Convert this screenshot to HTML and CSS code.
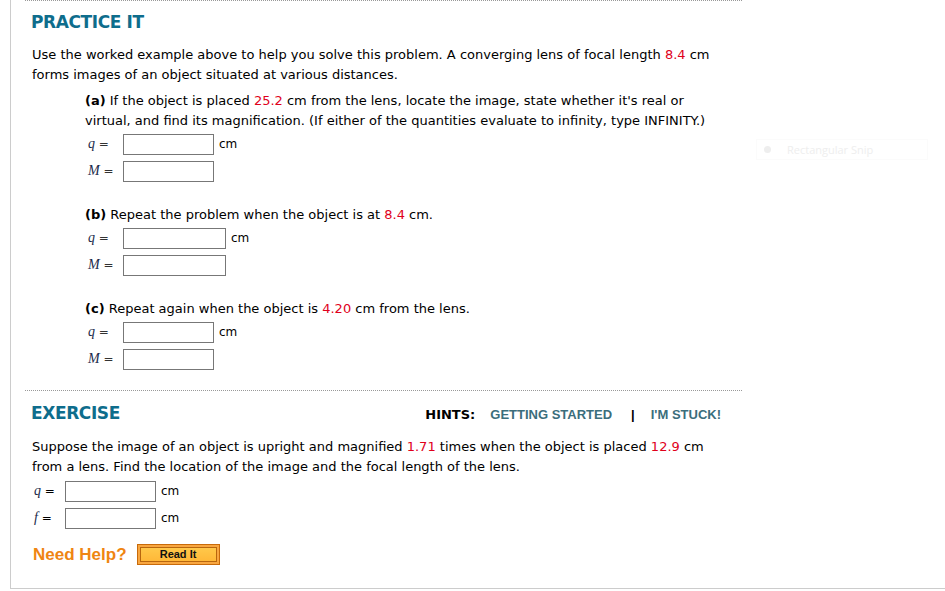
FILE: index.html
```html
<!DOCTYPE html>
<html>
<head>
<meta charset="utf-8">
<link rel="stylesheet" href="styles.css">
</head>
<body>
<div class="frame">
  <div class="section">
    <h2 class="title">PRACTICE IT</h2>
    <p class="text">Use the worked example above to help you solve this problem. A converging lens of focal length <span class="num">8.4</span> cm forms images of an object situated at various distances.</p>
    <div class="part">
      <p class="text ptext"><b>(a)</b> If the object is placed <span class="num">25.2</span> cm from the lens, locate the image, state whether it's real or virtual, and find its magnification. (If either of the quantities evaluate to infinity, type INFINITY.)</p>
      <div class="row"><span class="lbl"><i class="var">q</i> =</span><input class="box"><span class="unit">cm</span></div>
      <div class="row"><span class="lbl"><i class="var">M</i> =</span><input class="box"></div>
    </div>
    <div class="part gap">
      <p class="text ptext"><b>(b)</b> Repeat the problem when the object is at <span class="num">8.4</span> cm.</p>
      <div class="row"><span class="lbl"><i class="var">q</i> =</span><input class="box wide"><span class="unit">cm</span></div>
      <div class="row"><span class="lbl"><i class="var">M</i> =</span><input class="box wide"></div>
    </div>
    <div class="part gap">
      <p class="text ptext"><b>(c)</b> Repeat again when the object is <span class="num">4.20</span> cm from the lens.</p>
      <div class="row"><span class="lbl"><i class="var">q</i> =</span><input class="box"><span class="unit">cm</span></div>
      <div class="row"><span class="lbl"><i class="var">M</i> =</span><input class="box"></div>
    </div>
  </div>
  <div class="section ex">
    <div class="exhead">
      <h2 class="title">EXERCISE</h2>
      <div class="hints"><b class="hl">HINTS:</b><a class="hint">GETTING STARTED</a><span class="sep">|</span><a class="hint">I'M STUCK!</a></div>
    </div>
    <p class="text extext">Suppose the image of an object is upright and magnified <span class="num">1.71</span> times when the object is placed <span class="num">12.9</span> cm from a lens. Find the location of the image and the focal length of the lens.</p>
    <div class="row ex-row"><span class="lbl2"><i class="var">q</i> =</span><input class="box"><span class="unit">cm</span></div>
    <div class="row ex-row"><span class="lbl2"><i class="var">f</i> =</span><input class="box"><span class="unit">cm</span></div>
    <div class="help"><span class="need">Need Help?</span><span class="btn"><span class="btn-in">Read It</span></span></div>
  </div>
  <div class="snip"><span class="dot"></span>Rectangular Snip</div>
</div>
</body>
</html>
```
FILE: styles.css
```css
body {
  margin: 0;
  background: #fff;
  font-family: "DejaVu Sans", Verdana, sans-serif;
  font-size: 13px;
  color: #000;
}
.frame {
  margin-left: 10px;
  width: 935px;
  height: 589px;
  border-left: 1px solid #ccc;
  border-bottom: 1px solid #ccc;
  box-sizing: border-box;
  padding-left: 14px;
  position: relative;
}
.section {
  width: 717px;
  border-top: 1px dotted #999;
  padding: 0 0 0 6px;
  box-sizing: border-box;
}
.title {
  margin: 0;
  padding-top: 11px;
  font-family: "DejaVu Sans", sans-serif;
  font-weight: bold;
  font-size: 17px;
  letter-spacing: -0.4px;
  color: #0e6d8c;
  line-height: 20px;
}
.text {
  margin: 0;
  line-height: 20px;
  padding-left: 1px;
}
.section > .text { margin-top: 13px; }
.ptext { width: 642px; }
.extext { width: 688px; }
.num { color: #e0001b; }
.part {
  margin-top: 6px;
  padding-left: 53px;
}
.part.gap { margin-top: 23px; }
.row {
  display: flex;
  align-items: center;
  margin-top: 6px;
  height: 21px;
}
.part .text + .row { margin-top: 3px; }
.lbl {
  width: 39px;
  padding-left: 4px;
  box-sizing: border-box;
  font-size: 12px;
  line-height: 21px;
  color: #333;
}
.var {
  font-family: "Liberation Serif", serif;
  font-size: 14px;
  line-height: 14px;
  color: #1a2a4a;
}
.box {
  width: 91px;
  height: 21px;
  box-sizing: border-box;
  border: 1px solid #777;
  margin: 0;
  padding: 0;
  background: #fff;
  font-size: 12px;
  display: block;
}
.box.wide { width: 103px; }
.unit {
  margin-left: 5px;
  font-family: "DejaVu Sans", sans-serif;
  font-size: 12px;
  line-height: 14px;
  position: relative;
  top: -1px;
}
.ex { margin-top: 20px; }
.exhead {
  display: flex;
  align-items: baseline;
  justify-content: space-between;
  padding-right: 21px;
}
.exhead .title { padding-top: 12px; }
.hints {
  font-family: "Liberation Sans", Arial, sans-serif;
  font-size: 13px;
  font-weight: bold;
}
.hl {
  font-family: "DejaVu Sans", sans-serif;
  font-size: 13px;
  margin-right: 15px;
}
.hint { color: #3b6e7c; }
.sep { margin: 0 16px 0 19px; color: #000; }
.ex > .text { margin-top: 14px; }
.ex-row { margin-top: 6px; }
.ex > .text + .ex-row { margin-top: 4px; }
.lbl2 {
  width: 34px;
  padding-left: 3px;
  box-sizing: border-box;
  font-size: 12px;
  line-height: 21px;
}
.help {
  display: flex;
  align-items: center;
  margin-top: 15px;
  padding-left: 2px;
}
.need {
  font-family: "Liberation Sans", Arial, sans-serif;
  font-weight: bold;
  font-size: 17px;
  line-height: 21px;
  color: #ef8512;
}
.btn {
  margin-left: 10px;
  width: 83px;
  height: 21px;
  box-sizing: border-box;
  border: 1px solid #c86a0a;
  background: #f8a640;
  padding: 2px;
  display: flex;
}
.btn-in {
  flex: 1;
  border: 1px solid #b8660e;
  background: linear-gradient(#ffc84a, #ffb838);
  font-family: "Liberation Sans", Arial, sans-serif;
  font-weight: bold;
  font-size: 11px;
  line-height: 13px;
  text-align: center;
  color: #111;
}
.snip {
  position: absolute;
  left: 745px;
  top: 139px;
  width: 172px;
  height: 21px;
  border: 1px solid #fbfbfb;
  color: #eee;
  font-family: "Open Sans", sans-serif;
  font-size: 11px;
  display: flex;
  align-items: center;
  box-sizing: border-box;
}
.dot {
  width: 7px;
  height: 7px;
  border-radius: 50%;
  background: #eee;
  margin: 0 16px 0 7px;
}
```
